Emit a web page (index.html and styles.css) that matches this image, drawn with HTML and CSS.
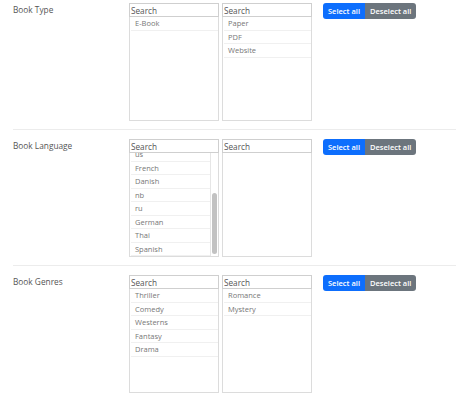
FILE: index.html
```html
<!DOCTYPE html>
<html lang="en">
<head>
    <meta charset="UTF-8">
    <meta name="viewport" content="width=device-width, initial-scale=1.0">
    <title>Book Filters</title>
    <link rel="stylesheet" href="styles.css">
</head>
<body>

    <div class="container">

        <!-- Book Type -->
        <div class="field-row">
            <label class="field-label">Book Type</label>
            <div class="dual-list">
                <div class="list-box">
                    <input type="text" class="list-search" placeholder="Search">
                    <ul class="list-items">
                        <li>E-Book</li>
                    </ul>
                </div>
                <div class="list-box">
                    <input type="text" class="list-search" placeholder="Search">
                    <ul class="list-items">
                        <li>Paper</li>
                        <li>PDF</li>
                        <li>Website</li>
                    </ul>
                </div>
            </div>
            <div class="btn-group">
                <button class="btn btn-primary">Select all</button>
                <button class="btn btn-secondary">Deselect all</button>
            </div>
        </div>

        <!-- Book Language -->
        <div class="field-row">
            <label class="field-label">Book Language</label>
            <div class="dual-list">
                <div class="list-box">
                    <input type="text" class="list-search" placeholder="Search">
                    <ul class="list-items scrolled">
                        <li>us</li>
                        <li>French</li>
                        <li>Danish</li>
                        <li>nb</li>
                        <li>ru</li>
                        <li>German</li>
                        <li>Thai</li>
                        <li>Spanish</li>
                        <span class="scroll-track"><span class="scroll-thumb"></span></span>
                    </ul>
                </div>
                <div class="list-box">
                    <input type="text" class="list-search" placeholder="Search">
                    <ul class="list-items"></ul>
                </div>
            </div>
            <div class="btn-group">
                <button class="btn btn-primary">Select all</button>
                <button class="btn btn-secondary">Deselect all</button>
            </div>
        </div>

        <!-- Book Genres -->
        <div class="field-row">
            <label class="field-label">Book Genres</label>
            <div class="dual-list">
                <div class="list-box">
                    <input type="text" class="list-search" placeholder="Search">
                    <ul class="list-items">
                        <li>Thriller</li>
                        <li>Comedy</li>
                        <li>Westerns</li>
                        <li>Fantasy</li>
                        <li>Drama</li>
                    </ul>
                </div>
                <div class="list-box">
                    <input type="text" class="list-search" placeholder="Search">
                    <ul class="list-items">
                        <li>Romance</li>
                        <li>Mystery</li>
                    </ul>
                </div>
            </div>
            <div class="btn-group">
                <button class="btn btn-primary">Select all</button>
                <button class="btn btn-secondary">Deselect all</button>
            </div>
        </div>

    </div>

</body>
</html>
```

FILE: styles.css
```css
body {
    font-family: "Open Sans", sans-serif;
    background-color: #fff;
    margin: 0;
    padding: 0;
}
.container {
    padding: 0 18px 0 13px;
}
.field-row {
    display: flex;
    align-items: flex-start;
    padding: 9px 0 8px;
    border-bottom: 1px solid #ececec;
}
.field-row:first-child {
    padding-top: 3px;
}
.field-label {
    width: 116px;
    flex-shrink: 0;
    padding-top: 1px;
    font-size: 8.3px;
    color: #555;
}
.dual-list {
    display: flex;
    gap: 3px;
}
.list-box {
    width: 90px;
}
.list-search {
    display: block;
    box-sizing: border-box;
    width: 100%;
    height: 14px;
    margin: 0;
    padding: 0 1px;
    border: 1px solid #cfcfcf;
    border-radius: 0;
    font-family: inherit;
    font-size: 8.2px;
    line-height: 12px;
    color: #444;
    outline: none;
}
.list-search::placeholder {
    color: #555;
}
.list-items {
    box-sizing: border-box;
    height: 104px;
    margin: 0;
    padding: 0;
    list-style: none;
    border: 1px solid #dcdcdc;
    border-top: none;
    overflow-y: auto;
}
.list-items li {
    flex-shrink: 0;
    margin-left: 1px;
    padding-left: 4px;
    line-height: 12.5px;
    font-size: 7.5px;
    color: #777;
    border-bottom: 1px solid #f0f0f0;
}

/* list scrolled to its end, with a slim scrollbar */
.list-items.scrolled {
    position: relative;
    display: flex;
    flex-direction: column;
    justify-content: flex-end;
    overflow: hidden;
    padding-right: 8px;
}
.scroll-track {
    position: absolute;
    top: 0;
    right: 0;
    bottom: 0;
    width: 7px;
    border-left: 1px solid #e6e6e6;
    background: #fff;
}
.scroll-thumb {
    position: absolute;
    left: 1px;
    right: 1px;
    bottom: 2px;
    height: 61px;
    border-radius: 3px;
    background-color: #c2c2c2;
}

.btn-group {
    display: flex;
    margin-left: 11px;
}
.btn {
    height: 16px;
    margin: 0;
    padding: 0 5px;
    border: none;
    font-family: inherit;
    font-size: 7.5px;
    font-weight: 600;
    color: #fff;
    cursor: pointer;
}
.btn-primary {
    background-color: #0d6efd;
    border-radius: 3px 0 0 3px;
}
.btn-secondary {
    background-color: #6c757d;
    border-radius: 0 3px 3px 0;
}
.btn-primary:hover {
    background-color: #0b5ed7;
}
.btn-secondary:hover {
    background-color: #5c636a;
}
```
